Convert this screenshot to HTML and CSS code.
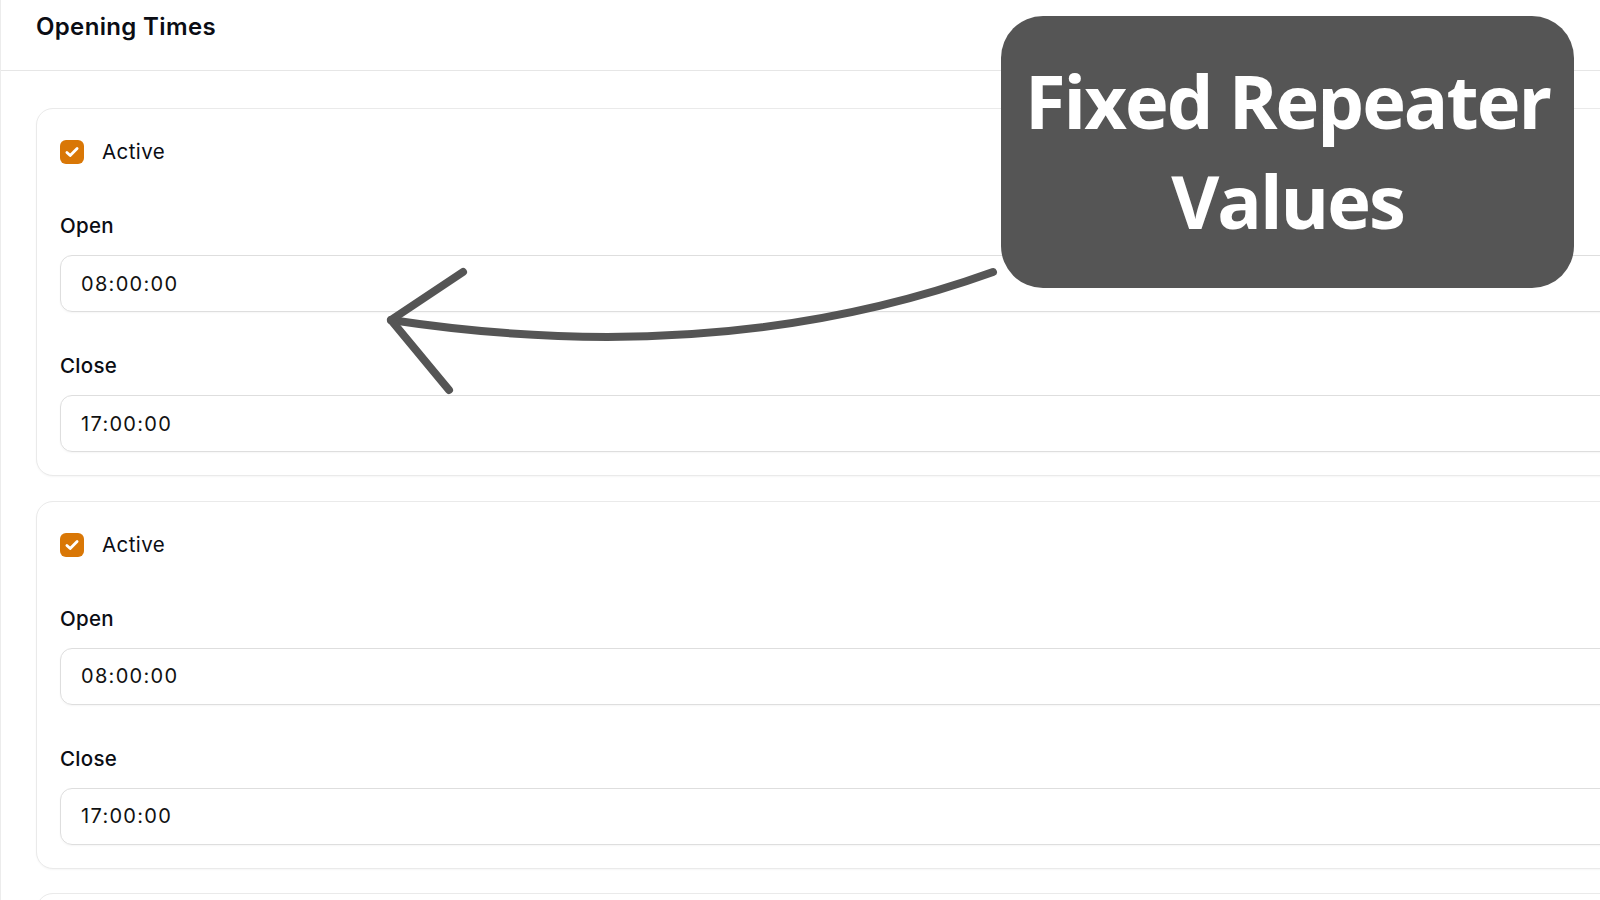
FILE: index.html
```html
<!DOCTYPE html>
<html lang="en">
<head>
<meta charset="utf-8">
<title>Opening Times</title>
<link rel="stylesheet" href="styles.css">
</head>
<body>
<div class="page">
  <header class="section-head"><h2 class="section-title">Opening Times</h2></header>
  <div class="items">
    <div class="item">
      <div class="check-row">
        <span class="checkbox"><svg viewBox="0 0 24 24" width="24" height="24"><path d="M6.9 12.4l3.3 3.2 6.9-7" fill="none" stroke="#fff" stroke-width="2.8" stroke-linecap="round" stroke-linejoin="round"/></svg></span>
        <span class="check-label">Active</span>
      </div>
      <div class="field">
        <div class="field-label">Open</div>
        <div class="input">08:00:00</div>
      </div>
      <div class="field last">
        <div class="field-label">Close</div>
        <div class="input">17:00:00</div>
      </div>
    </div>
    <div class="item">
      <div class="check-row">
        <span class="checkbox"><svg viewBox="0 0 24 24" width="24" height="24"><path d="M6.9 12.4l3.3 3.2 6.9-7" fill="none" stroke="#fff" stroke-width="2.8" stroke-linecap="round" stroke-linejoin="round"/></svg></span>
        <span class="check-label">Active</span>
      </div>
      <div class="field">
        <div class="field-label">Open</div>
        <div class="input">08:00:00</div>
      </div>
      <div class="field last">
        <div class="field-label">Close</div>
        <div class="input">17:00:00</div>
      </div>
    </div>
    <div class="item item-empty"></div>
  </div>

  <div class="callout">Fixed Repeater<br>Values</div>

  <svg class="arrow" viewBox="0 0 1600 900" width="1600" height="900">
    <g fill="none" stroke="#555555" stroke-width="8" stroke-linecap="round" stroke-linejoin="round">
      <path d="M992 272 Q720 370 390 320"/>
      <path d="M462 272 L390 320 L448 390"/>
    </g>
  </svg>
</div>
</body>
</html>
```

FILE: styles.css
```css
html, body {
  margin: 0;
  padding: 0;
  background: #ffffff;
  overflow: hidden;
  width: 1600px;
  height: 900px;
}

body {
  font-family: Inter, "Liberation Sans", sans-serif;
  color: #0b0d14;
}

.page {
  position: relative;
  width: 1600px;
  height: 900px;
  overflow: hidden;
  border-left: 1px solid #ececec;
  box-sizing: border-box;
}

.section-head {
  height: 71px;
  box-sizing: border-box;
  border-bottom: 1px solid #e6e6e6;
  padding: 11px 0 0 35px;
}

.section-title {
  margin: 0;
  font-size: 24px;
  line-height: 32px;
  font-weight: 600;
  letter-spacing: 0.35px;
}

.items {
  display: flex;
  flex-direction: column;
  gap: 24.5px;
  width: 1700px;
  padding: 37px 0 0 35px;
}

.item {
  border: 1px solid #eaeaea;
  border-radius: 17px;
  box-shadow: 0 1px 2px rgba(0, 0, 0, 0.04);
  padding: 23px 0 23px 23px;
  background: #fff;
}

.item-empty {
  height: 320px;
}

.check-row {
  display: flex;
  align-items: center;
  height: 40px;
  gap: 18px;
  margin-bottom: 40px;
}

.checkbox {
  width: 24px;
  height: 24px;
  border-radius: 6px;
  background: #d97706;
  display: flex;
}

.check-label {
  font-size: 20.5px;
  font-weight: 400;
  line-height: 28px;
  letter-spacing: 0.4px;
}

.field {
  margin-bottom: 40px;
}

.field.last {
  margin-bottom: 0;
}

.field-label {
  font-size: 20.5px;
  font-weight: 500;
  line-height: 28px;
  letter-spacing: 0.3px;
  margin-bottom: 15px;
}

.input {
  height: 57px;
  box-sizing: border-box;
  border: 1px solid #dedede;
  border-radius: 12px;
  box-shadow: 0 1px 2px rgba(0, 0, 0, 0.04);
  display: flex;
  align-items: center;
  padding-left: 20px;
  font-size: 20px;
  letter-spacing: 1.3px;
  color: #111111;
}

.callout {
  position: absolute;
  left: 1000px;
  top: 16px;
  width: 573px;
  height: 272px;
  box-sizing: border-box;
  background: #555555;
  border-radius: 42px;
  color: #ffffff;
  font-family: "Open Sans", "Noto Sans", sans-serif;
  font-weight: 700;
  font-size: 74px;
  line-height: 100px;
  letter-spacing: -2px;
  text-align: center;
  display: flex;
  align-items: center;
  justify-content: center;
  padding-bottom: 2px;
}

.arrow {
  position: absolute;
  left: 0;
  top: 0;
  pointer-events: none;
}
```
